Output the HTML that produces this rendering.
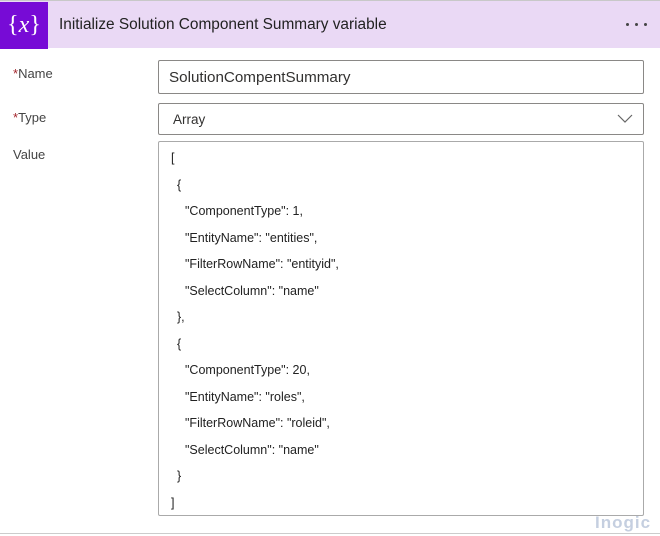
<!DOCTYPE html>
<html><head><style>
body{margin:0;width:660px;height:536px;background:#fff;font-family:"Liberation Sans",sans-serif;position:relative;overflow:hidden;color:#323130}
.hdr{position:absolute;left:0;top:0;width:660px;height:48px;background:#ead9f5;border-top:1px solid #c8c8c8;box-sizing:border-box}
.ic{position:absolute;left:0;top:1px;width:48px;height:47px;background:#770bd6;color:#fff;font-family:"Liberation Serif",serif;font-size:24px;line-height:46px;text-align:center}
.ttl{position:absolute;left:59px;top:15px;font-size:15.4px;color:#222}
.dots{position:absolute;left:626px;top:22px;width:3px;height:3px;background:#444;border-radius:50%;box-shadow:9px 0 #444,18px 0 #444}
.lbl{position:absolute;left:13px;font-size:13px;color:#444}
.lbl b{color:#a4262c;font-weight:normal}
.box{position:absolute;left:158px;width:486px;border:1px solid #8a8886;border-radius:2px;box-sizing:border-box;font-size:14px}
.code{position:absolute;left:0;font-size:12.5px;color:#222}
</style></head><body>
<div class="hdr"><div class="ic">{<i>x</i>}</div><div class="ttl">Initialize Solution Component Summary variable</div><div class="dots"></div></div>
<div class="lbl" style="top:66px"><b>*</b>Name</div>
<div class="lbl" style="top:110px"><b>*</b>Type</div>
<div class="lbl" style="top:147px">Value</div>
<div class="box" style="top:60px;height:34px"><span style="position:absolute;left:10px;top:8px;font-size:15.2px">SolutionCompentSummary</span></div>
<div class="box" style="top:103px;height:32px"><span style="position:absolute;left:14px;top:8px;font-size:13.5px">Array</span>
<svg style="position:absolute;right:10px;top:10px" width="16" height="10"><path d="M1 1 L8 8 L15 1" fill="none" stroke="#666" stroke-width="1.2"/></svg></div>
<div class="box" style="top:141px;height:375px;border-color:#aaa">
<div class="code" style="left:12px;top:9px">[</div>
<div class="code" style="left:18px;top:36px">{</div>
<div class="code" style="left:26px;top:62px">"ComponentType": 1,</div>
<div class="code" style="left:26px;top:89px">"EntityName": "entities",</div>
<div class="code" style="left:26px;top:115px">"FilterRowName": "entityid",</div>
<div class="code" style="left:26px;top:142px">"SelectColumn": "name"</div>
<div class="code" style="left:18px;top:168px">},</div>
<div class="code" style="left:18px;top:195px">{</div>
<div class="code" style="left:26px;top:221px">"ComponentType": 20,</div>
<div class="code" style="left:26px;top:248px">"EntityName": "roles",</div>
<div class="code" style="left:26px;top:274px">"FilterRowName": "roleid",</div>
<div class="code" style="left:26px;top:301px">"SelectColumn": "name"</div>
<div class="code" style="left:18px;top:327px">}</div>
<div class="code" style="left:12px;top:354px">]</div>
</div>
<div style="position:absolute;left:0;top:533px;width:660px;height:1px;background:#ccc"></div>
<div style="position:absolute;left:595px;top:513px;font-size:17px;font-weight:bold;color:#c5cfe0;letter-spacing:1px">Inogic</div>
</body></html>
